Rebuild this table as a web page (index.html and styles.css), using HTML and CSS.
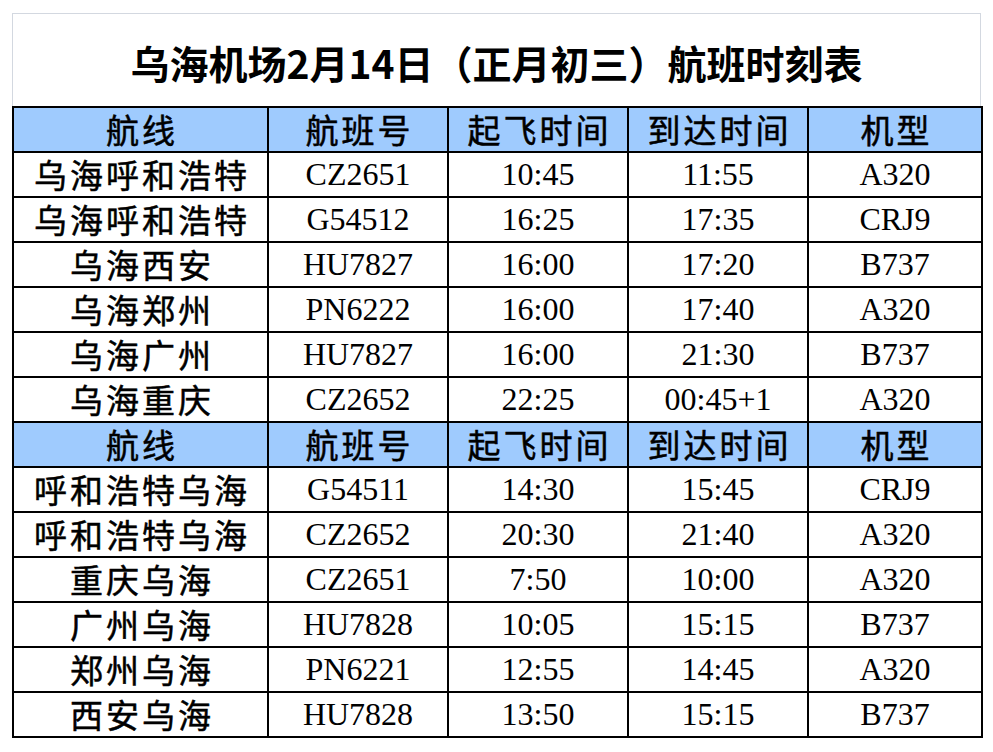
FILE: index.html
```html
<!DOCTYPE html>
<html lang="zh">
<head>
<meta charset="utf-8">
<title>乌海机场航班时刻表</title>
<link rel="stylesheet" href="styles.css">
</head>
<body>
<div class="sheet">
  <div class="title">乌海机场2月14日（正月初三）航班时刻表</div>
  <table class="schedule">
    <colgroup>
      <col class="c-route"><col class="c-no"><col class="c-time"><col class="c-time"><col class="c-type">
    </colgroup>
    <tbody>
      <tr class="head"><td>航线</td><td>航班号</td><td>起飞时间</td><td>到达时间</td><td>机型</td></tr>
      <tr><td class="cn">乌海呼和浩特</td><td>CZ2651</td><td>10:45</td><td>11:55</td><td>A320</td></tr>
      <tr><td class="cn">乌海呼和浩特</td><td>G54512</td><td>16:25</td><td>17:35</td><td>CRJ9</td></tr>
      <tr><td class="cn">乌海西安</td><td>HU7827</td><td>16:00</td><td>17:20</td><td>B737</td></tr>
      <tr><td class="cn">乌海郑州</td><td>PN6222</td><td>16:00</td><td>17:40</td><td>A320</td></tr>
      <tr><td class="cn">乌海广州</td><td>HU7827</td><td>16:00</td><td>21:30</td><td>B737</td></tr>
      <tr><td class="cn">乌海重庆</td><td>CZ2652</td><td>22:25</td><td>00:45+1</td><td>A320</td></tr>
      <tr class="head"><td>航线</td><td>航班号</td><td>起飞时间</td><td>到达时间</td><td>机型</td></tr>
      <tr><td class="cn">呼和浩特乌海</td><td>G54511</td><td>14:30</td><td>15:45</td><td>CRJ9</td></tr>
      <tr><td class="cn">呼和浩特乌海</td><td>CZ2652</td><td>20:30</td><td>21:40</td><td>A320</td></tr>
      <tr><td class="cn">重庆乌海</td><td>CZ2651</td><td>7:50</td><td>10:00</td><td>A320</td></tr>
      <tr><td class="cn">广州乌海</td><td>HU7828</td><td>10:05</td><td>15:15</td><td>B737</td></tr>
      <tr><td class="cn">郑州乌海</td><td>PN6221</td><td>12:55</td><td>14:45</td><td>A320</td></tr>
      <tr><td class="cn">西安乌海</td><td>HU7828</td><td>13:50</td><td>15:15</td><td>B737</td></tr>
    </tbody>
  </table>
</div>
</body>
</html>
```

FILE: styles.css
```css
html, body {
  margin: 0;
  padding: 0;
  background: #ffffff;
}

.sheet {
  margin: 13px 0 0 12px;
  width: 969px;
}

.title {
  box-sizing: border-box;
  height: 93px;
  border: 1px solid #d3d8e0;
  border-bottom: none;
  display: flex;
  align-items: center;
  justify-content: center;
  padding-top: 4px;
  font-family: "Noto Sans CJK SC", "Noto Sans", sans-serif;
  font-weight: 700;
  font-size: 39px;
  line-height: 50px;
  color: #000;
}

.schedule {
  width: 969px;
  border-collapse: collapse;
  table-layout: fixed;
  border: 2px solid #000;
}

.c-route { width: 255px; }
.c-no { width: 180px; }
.c-time { width: 180px; }
.c-type { width: 174px; }

.schedule td {
  border: 2px solid #000;
  height: 43px;
  line-height: 43px;
  padding: 0;
  text-align: center;
  vertical-align: middle;
  font-family: "Liberation Serif", "Noto Sans CJK SC", serif;
  font-size: 32px;
  color: #000;
  white-space: nowrap;
}

.schedule td.cn,
.schedule .head td {
  font-family: "Noto Sans CJK SC", sans-serif;
  font-size: 33px;
  font-weight: 400;
  letter-spacing: 3px;
  text-indent: 3px;
  -webkit-text-stroke: 0.5px #000;
}

.schedule .head td {
  background: #9fcbfe;
}
```
